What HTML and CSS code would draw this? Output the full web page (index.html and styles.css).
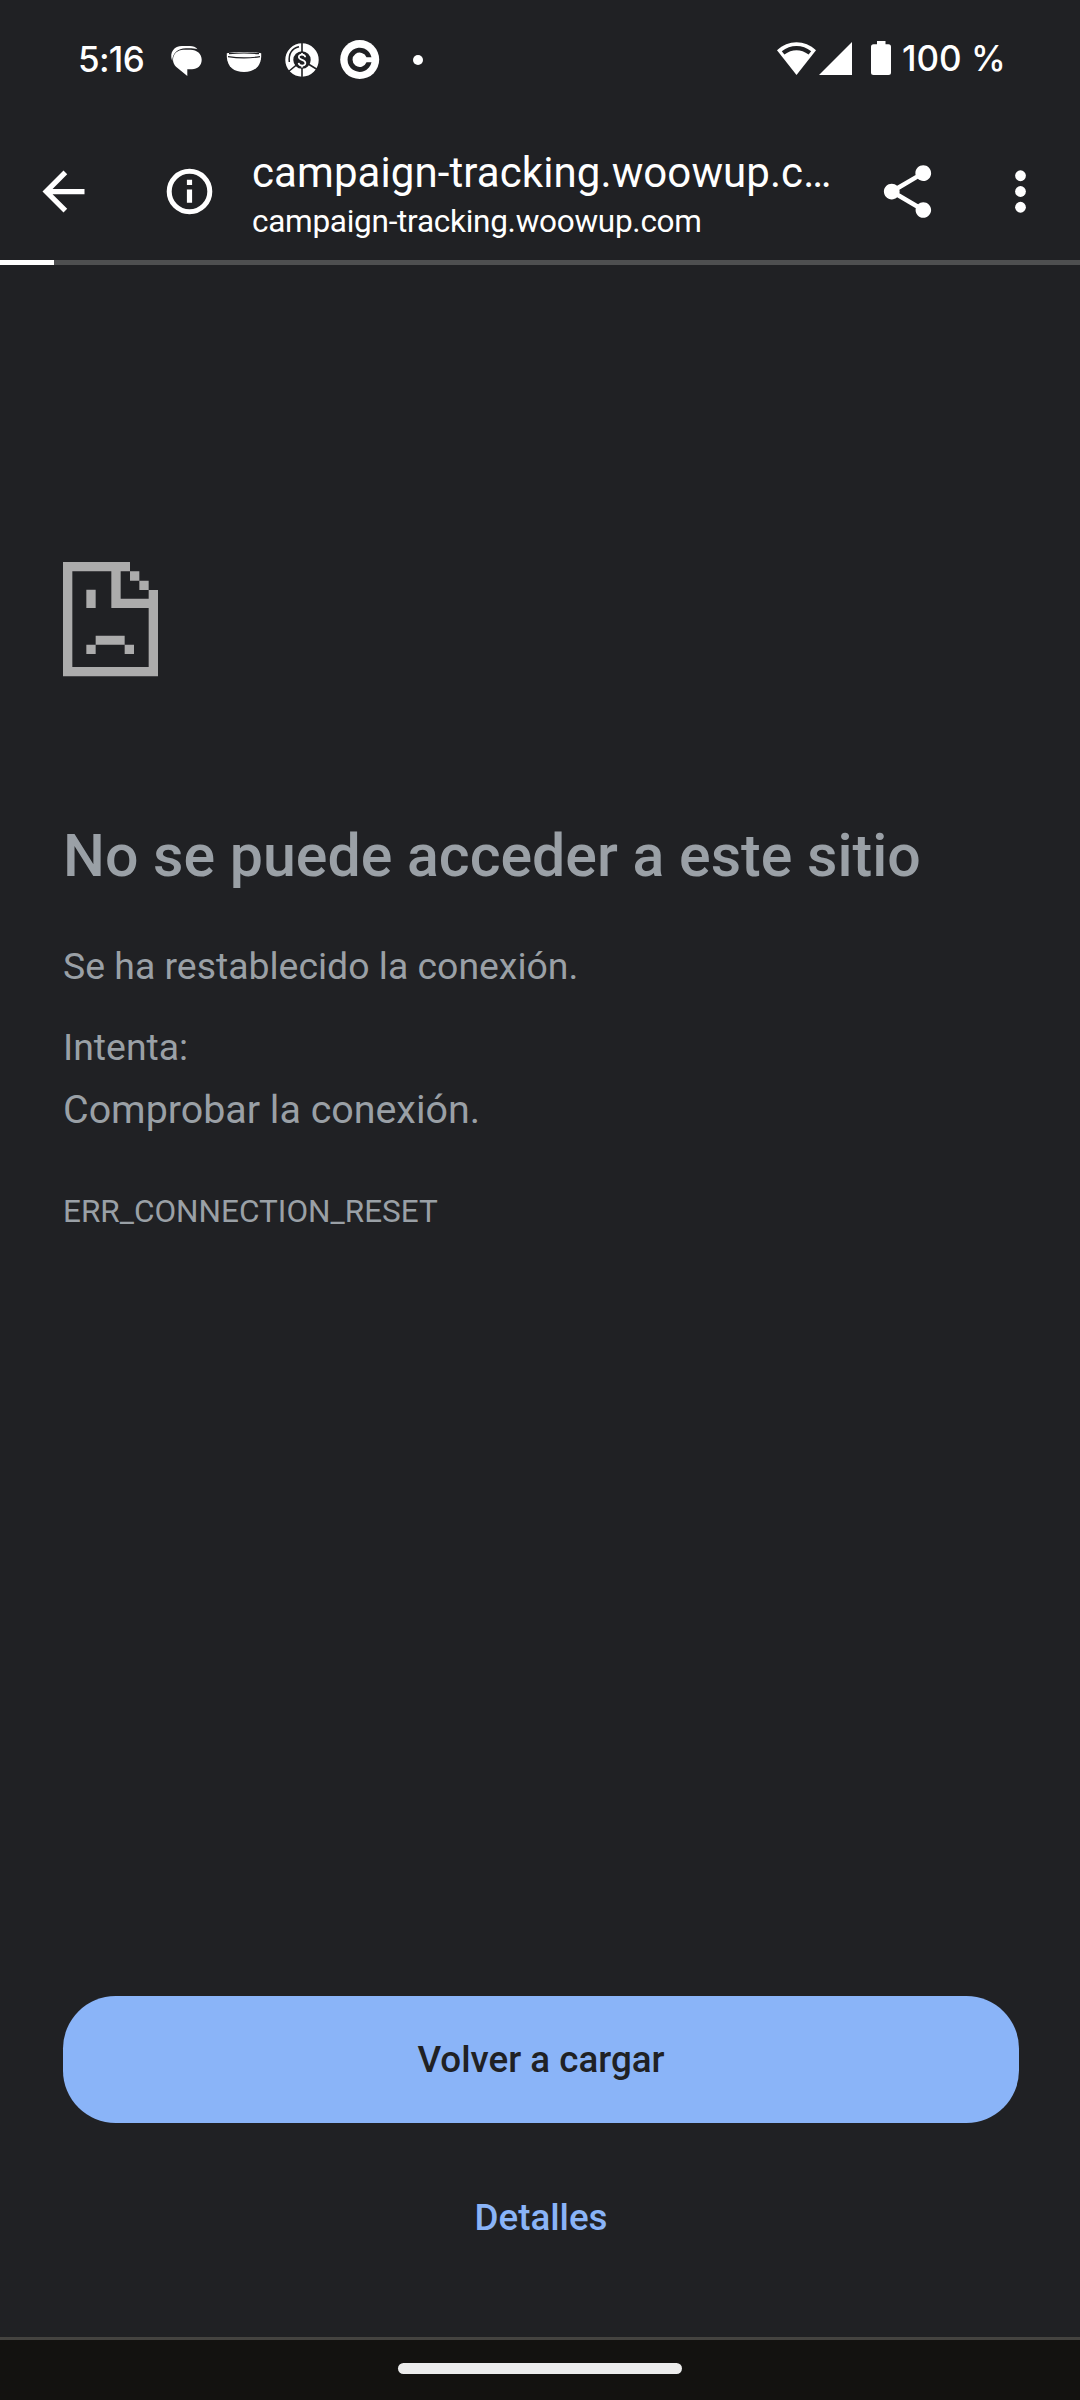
FILE: index.html
```html
<!DOCTYPE html>
<html lang="es">
<head>
<meta charset="utf-8">
<title>campaign-tracking.woowup.com</title>
<link rel="stylesheet" href="styles.css">
</head>
<body>
<div class="screen">
  <header class="status">
    <span class="clock">5:16</span>
    <svg class="notifications" width="256" height="40" viewBox="168 40 256 40" fill="#fff">
      <path d="M172.200 61C169 52 174.500 46 182 46H190C193 46 195.800 47.200 197.500 49.200C194.500 48.300 191 48.200 186 48.300C177.500 48.500 172.800 53 172.200 61Z"/>
      <path d="M183.500 49.800H190.500C197 49.800 201.700 54 201.700 59.800C201.700 65.500 197.500 69.300 192 69.300H187.300V76L176 66.800C174.200 65 173 62.500 173 59.800C173 54 177.500 49.800 183.500 49.800Z"/>
      <path d="M226.800 53.300C234 51.400 254 51.400 261.200 53.300V57C260.500 67 254 72 244 72C234 72 227.500 67 226.800 57Z"/>
      <path d="M229 53.700Q244 52.300 259 53.700M228 56.700Q244 59.200 260 56.700" fill="none" stroke="#202124" stroke-width="1.200"/>
      <circle cx="302" cy="60" r="12.700" fill="none" stroke="#fff" stroke-width="8"/>
      <path d="M302 42V53M302 67V78M307.500 63.500L318 70M297 64.500L288 72" fill="none" stroke="#202124" stroke-width="1.600"/>
      <path d="M289.300 62C288.500 53.500 292 48.500 299 46.800" fill="none" stroke="#202124" stroke-width="1.500"/>
      <path d="M305.300 57.300C305 53.800 298.800 53.800 298.800 57C298.800 60.500 305.400 59.300 305.400 63C305.400 66.500 299 66.400 298.600 62.800M302 53V55M302 65.500V67.500" fill="none" stroke="#fff" stroke-width="1.700"/>
      <circle cx="359.700" cy="59.600" r="19.500"/>
      <path d="M371.500 57.300H366.500A7.200 7.200 0 1 0 366.500 62.300H371.500A12.100 12.100 0 1 1 371.500 57.300Z" fill="#202124"/>
      <circle cx="418" cy="60" r="5"/>
    </svg>
    <svg class="system" width="115" height="36" viewBox="777 40 115 36" fill="#fff">
      <path d="M777 50.300C788 39.600 805 39.600 816 50.300L796.500 75Z"/>
      <path d="M781.800 51.200C790.500 44.200 802.500 44.200 811.200 51.200L808.600 54.500C801 48.800 792 48.800 784.400 54.500Z" fill="#202124"/>
      <path d="M852 42V75H819Z"/>
      <path d="M877 41H885.500V44.200H888.500Q891 44.200 891 46.700V72.500Q891 75 888.500 75H873.500Q871 75 871 72.500V46.700Q871 44.200 873.500 44.200H877Z"/>
    </svg>
    <span class="percent">100 %</span>
  </header>

  <nav class="toolbar">
    <svg class="back" width="63" height="63" viewBox="0 0 24 24" fill="#fff"><path d="M20 11H7.830l5.590-5.590L12 4l-8 8 8 8 1.410-1.410L7.830 13H20v-2z"/></svg>
    <svg class="info" width="47" height="47" viewBox="0 0 47 47" fill="#fff"><circle cx="23.500" cy="23.500" r="20.300" fill="none" stroke="#fff" stroke-width="5"/><path d="M20.900 11.700h5.200v5.200h-5.200zM20.900 21.500h5.200v13.200h-5.200z"/></svg>
    <div class="address">
      <div class="title">campaign-tracking.woowup.c…</div>
      <div class="host">campaign-tracking.woowup.com</div>
    </div>
    <svg class="share" width="63" height="63" viewBox="0 0 24 24" fill="#fff"><path d="M18 16.080c-.76 0-1.440.3-1.960.77L8.910 12.700c.05-.23.090-.46.090-.7s-.04-.47-.09-.7l7.050-4.110c.54.5 1.250.81 2.040.81 1.660 0 3-1.340 3-3s-1.340-3-3-3-3 1.340-3 3c0 .24.040.47.090.7L8.040 9.810C7.500 9.310 6.790 9 6 9c-1.660 0-3 1.340-3 3s1.340 3 3 3c.79 0 1.500-.31 2.040-.81l7.120 4.160c-.05.210-.08.430-.08.650 0 1.610 1.310 3 2.920 3s3-1.390 3-3-1.390-2.920-3-2.920z"/></svg>
    <svg class="more" width="63" height="63" viewBox="0 0 24 24" fill="#fff"><circle cx="12" cy="6" r="2.050"/><circle cx="12" cy="12" r="2.050"/><circle cx="12" cy="18" r="2.050"/></svg>
  </nav>
  <div class="progress"><div class="progress-value"></div></div>

  <main class="error-page">
    <svg class="sad" width="95" height="115" viewBox="69 65 285 345" fill="#acacac">
      <path fill-rule="evenodd" d="M69 65H270V93H242V175H326V149H354V408H69ZM97 93V380H326V203H214V93Z"/>
      <path d="M270 93h28v28h-28zM298 121h28v28h-28zM139 148h28v55h-28zM167 286h87v27h-87zM139 313h28v28h-28zM254 313h28v28h-28z"/>
    </svg>
    <h1>No se puede acceder a este sitio</h1>
    <p class="summary">Se ha restablecido la conexión.</p>
    <p class="try">Intenta:</p>
    <p class="suggestion">Comprobar la conexión.</p>
    <p class="code">ERR_CONNECTION_RESET</p>
    <div class="actions">
      <button class="reload"><span>Volver a cargar</span></button>
      <button class="details"><span>Detalles</span></button>
    </div>
  </main>
  <footer class="gesture"><div class="pill"></div></footer>
</div>
</body>
</html>
```
FILE: styles.css
```css
* { box-sizing: border-box; margin: 0; }
body { background: #202124; font-family: Roboto, sans-serif; }
svg { display: block; flex: none; }
.screen { display: flex; flex-direction: column; width: 1080px; height: 2400px; overflow: hidden; }

.status { display: flex; height: 123px; padding: 40px 0 0 78px; color: #fff; font-family: Inter, sans-serif; font-size: 35px; font-weight: 500; line-height: 38px; white-space: nowrap; }
.clock { width: 90px; letter-spacing: -.7px; }
.system { margin-left: 353px; }
.percent { margin-left: 10px; letter-spacing: 0; line-height: 37px; }

.toolbar { display: flex; align-items: center; height: 137px; padding-left: 32px; color: #fff; white-space: nowrap; }
.info { margin-left: 71px; }
.address { width: 578px; margin-left: 39px; padding-top: 6px; }
.title { font-size: 42px; line-height: 50px; letter-spacing: .09px; }
.host { margin-top: 5px; font-size: 31.5px; line-height: 38px; letter-spacing: -.27px; }
.share { margin-left: 46px; }
.more { margin-left: 50px; }

.progress { height: 5px; background: #4e4f50; }
.progress-value { width: 54px; height: 5px; background: #fff; }

.error-page { display: flex; flex-direction: column; flex: 1; padding: 297px 61px 0 63px; color: #9aa0a6; }
h1 { margin-top: 143px; font-size: 59.06px; font-weight: 500; line-height: 72px; white-space: nowrap; }
p { font-size: 37.4px; line-height: 56px; }
.summary { margin-top: 46px; }
.try { margin-top: 25px; }
.suggestion { margin-top: 7px; font-size: 39.4px; }
.code { margin-top: 50px; font-size: 31.5px; line-height: 48px; }
.actions { display: flex; flex-direction: column; margin-top: auto; padding-bottom: 56px; gap: 31px; }
button { height: 127px; border: 0; border-radius: 52.5px; background: none; font: 500 36.75px/56px Roboto, sans-serif; }
.reload { background: #8ab4f8; color: #202124; }
.details { color: #8ab4f8; }

.gesture { height: 63px; padding-top: 23px; border-top: 3px solid #444340; background: #131210; }
.pill { width: 284px; height: 11px; margin: 0 auto; border-radius: 6px; background: #ececec; }
```
